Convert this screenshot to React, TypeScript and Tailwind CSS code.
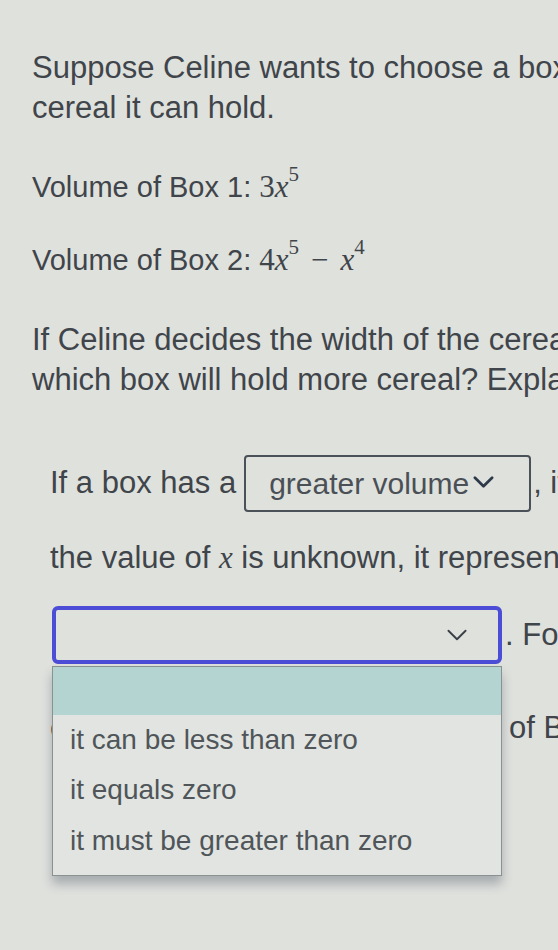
import React from "react";

const M = ({ children }: { children: React.ReactNode }) => (
  <span className="font-['Liberation_Serif',serif]">{children}</span>
);

const Chevron = ({ className, strokeWidth }: { className: string; strokeWidth: number }) => (
  <svg viewBox="0 0 24 14" className={className} fill="none" stroke="currentColor" strokeWidth={strokeWidth} strokeLinecap="round" strokeLinejoin="round">
    <path d="M2 2 L12 12 L22 2" />
  </svg>
);

export default function App() {
  return (
    <div className="min-h-[950px] w-[558px] overflow-hidden bg-[#dfe1dd] text-[#3f454a] font-['Liberation_Sans',Arial,sans-serif]">
      <div className="pl-[32px] pt-[48px]">
        <p className="whitespace-nowrap text-[31px] leading-[40px]">
          Suppose Celine wants to choose a box that holds the most
          <br />
          cereal it can hold.
        </p>
        <p className="mt-[39px] whitespace-nowrap text-[29px] leading-[40px]">
          Volume of Box 1:{" "}
          <M>
            <span className="text-[31px]">
              3<i>x</i>
            </span>
            <sup className="text-[21px] -top-[0.75em]">5</sup>
          </M>
        </p>
        <p className="mt-[33px] whitespace-nowrap text-[29px] leading-[40px]">
          Volume of Box 2:{" "}
          <M>
            <span className="text-[31px]">
              4<i>x</i>
            </span>
            <sup className="text-[21px] -top-[0.75em]">5</sup>
            <span className="mx-[12px] text-[31px]">−</span>
            <i className="text-[31px]">x</i>
            <sup className="text-[21px] -top-[0.75em]">4</sup>
          </M>
        </p>
        <p className="mt-[40px] whitespace-nowrap text-[31px] leading-[40px]">
          If Celine decides the width of the cereal box is 3 inches,
          <br />
          which box will hold more cereal? Explain.
        </p>

        <div className="ml-[18px] mt-[55px] flex items-center whitespace-nowrap text-[31px]">
          <span className="shrink-0">If a box has a</span>
          <div className="ml-[8px] flex h-[57px] w-[287px] shrink-0 items-center rounded-[4px] border-2 border-[#4b5158] pl-[23px]">
            <span className="text-[30px] text-[#4a5055]">greater volume</span>
            <Chevron className="ml-[4px] mt-[-4px] h-[12px] w-[21px] shrink-0 text-[#2e3a4a]" strokeWidth={3.2} />
          </div>
          <span className="ml-[2px] shrink-0">, it will hold more cereal.</span>
        </div>

        <p className="ml-[18px] mt-[26px] whitespace-nowrap text-[31px] leading-[40px]">
          the value of{" "}
          <M>
            <i>x</i>
          </M>{" "}
          is unknown, it represents a length, so
        </p>

        <div className="ml-[20px] mt-[28px] flex items-center whitespace-nowrap text-[31px]">
          <div className="relative shrink-0">
            <div className="flex h-[58px] w-[450px] items-center justify-end rounded-[6px] border-4 border-[#4b4dd6] pr-[30px]">
              <Chevron className="h-[12px] w-[22px] text-[#3a4046]" strokeWidth={2.2} />
            </div>
            <div className="absolute left-0 top-full z-10 mt-[2px] w-[450px] border border-[#8a9191] bg-[#e1e4e0] pb-[8px] shadow-[0_8px_10px_rgba(40,50,70,0.3)] text-[28px] text-[#4f5559]">
              <div className="h-[48px] bg-[#b4d4d2]" />
              <div className="pl-[17px] leading-[50px]">it can be less than zero</div>
              <div className="pl-[17px] leading-[50px]">it equals zero</div>
              <div className="pl-[17px] leading-[52px]">it must be greater than zero</div>
            </div>
          </div>
          <span className="ml-[3px] shrink-0">. For</span>
        </div>

        <p className="ml-[18px] mt-[44px] whitespace-nowrap text-[31px] leading-[40px]">
          example, if it's 3 then the volume of Box 2
        </p>
      </div>
    </div>
  );
}
